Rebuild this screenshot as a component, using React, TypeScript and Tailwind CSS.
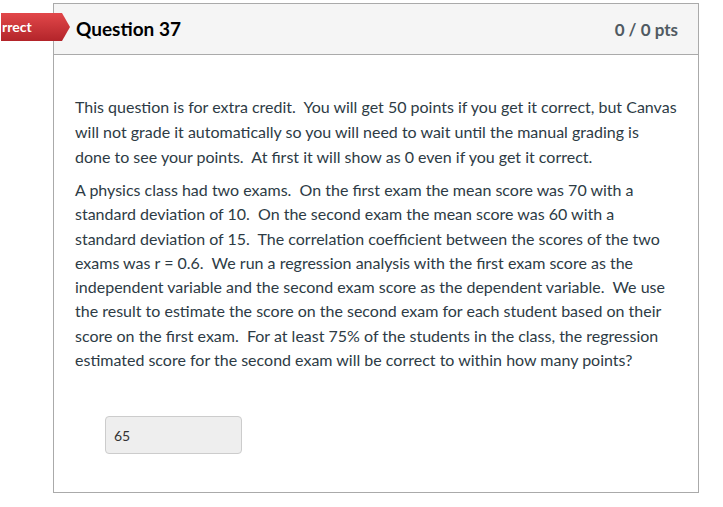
import React from "react";

const font = { fontFamily: "Lato, 'Noto Sans', sans-serif" };

export default function App() {
  return (
    <div className="min-h-[507px] bg-white pt-[3px] text-[#2d3b45]" style={font}>
      <div className="relative ml-[53px] w-[646px] border border-[#aaaaaa]">
        {/* status ribbon, runs off the page edge */}
        <div className="absolute left-[-53px] top-[9px] flex h-[28px] items-center">
          <div className="flex h-full w-[58px] items-center bg-gradient-to-b from-[#e2474a] to-[#b3242a] pl-[1px]">
            <span className="text-[14px] font-bold leading-[18px] text-white">rrect</span>
          </div>
          <svg width="11" height="28" viewBox="0 0 11 28" className="block">
            <defs>
              <linearGradient id="rg" x1="0" y1="0" x2="0" y2="1">
                <stop offset="0" stopColor="#e2474a" />
                <stop offset="1" stopColor="#b3242a" />
              </linearGradient>
            </defs>
            <polygon points="0,0 3,0 11,14 3,28 0,28" fill="url(#rg)" />
          </svg>
        </div>

        <div className="flex h-[51px] items-center justify-between border-b border-[#aaaaaa] bg-[#f5f5f5] pl-[22px] pr-[20px] pt-[1px]">
          <h2 className="text-[19px] font-bold text-black">Question 37</h2>
          <span className="text-[17px] font-bold text-[#505a62]">0 / 0 pts</span>
        </div>

        <div className="px-[21px] pt-[39px] pb-[38px] text-[16px] leading-[25px]">
          <p>
            This question is for extra credit.&nbsp; You will get 50 points if you get it correct, but Canvas will not
            grade it automatically so you will need to wait until the manual grading is done to see your points.&nbsp; At
            first it will show as 0 even if you get it correct.
          </p>
          <p className="mt-[9px] leading-[24.3px]">
            A physics class had two exams.&nbsp; On the first exam the mean score was 70 with a standard deviation of
            10.&nbsp; On the second exam the mean score was 60 with a standard deviation of 15.&nbsp; The correlation
            coefficient between the scores of the two exams was r = 0.6.&nbsp; We run a regression analysis with the first
            exam score as the independent variable and the second exam score as the dependent variable.&nbsp; We use the
            result to estimate the score on the second exam for each student based on their score on the first exam.&nbsp;
            For at least 75% of the students in the class, the regression estimated score for the second exam will be
            correct to within how many points?
          </p>

          <div className="mt-[44px] pl-[30px]">
            <div className="flex h-[38px] w-[137px] items-center rounded-[4px] border border-[#cccccc] bg-[#eeeeee] pl-[8px] text-[14px] text-[#333333]">
              65
            </div>
          </div>
        </div>
      </div>
    </div>
  );
}
